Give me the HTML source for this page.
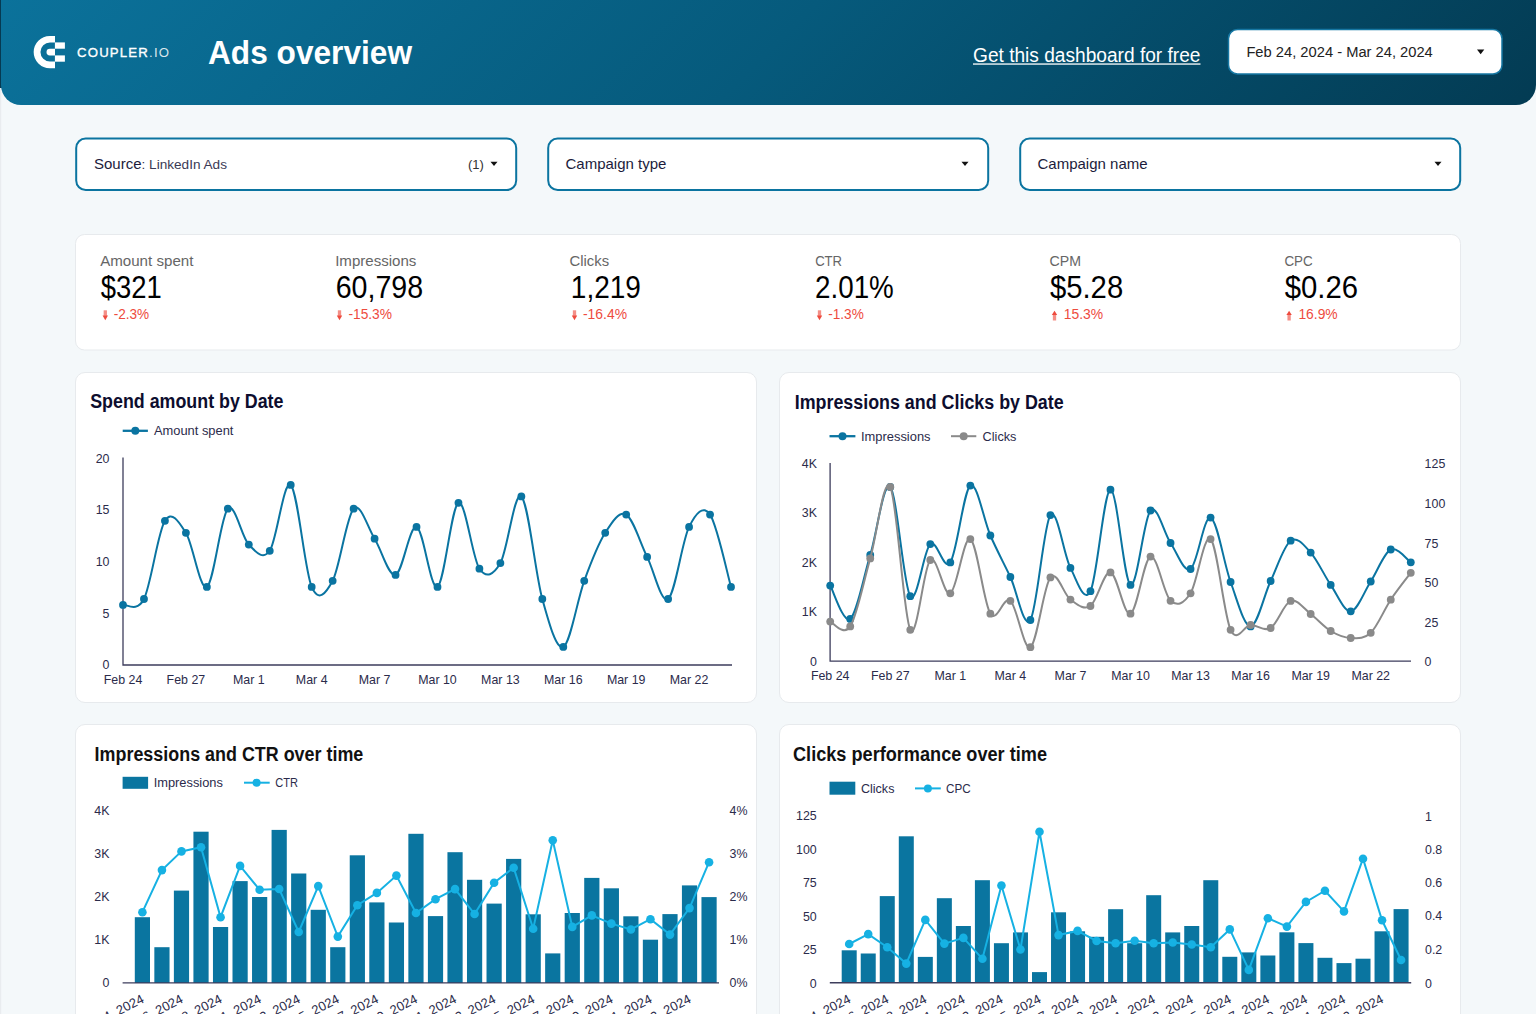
<!DOCTYPE html>
<html><head><meta charset="utf-8">
<style>
html,body{margin:0;padding:0;background:#f4f8fa;width:1536px;height:1014px;overflow:hidden}
svg{display:block;font-family:"Liberation Sans",sans-serif}
</style></head>
<body>
<svg width="1536" height="1014" viewBox="0 0 1536 1014">
<defs>
<linearGradient id="hg" x1="0" y1="0" x2="820" y2="820" gradientUnits="userSpaceOnUse">
<stop offset="0" stop-color="#0b729b"/>
<stop offset="0.5" stop-color="#065a7c"/>
<stop offset="1" stop-color="#033b53"/>
</linearGradient>
</defs>
<rect x="0" y="0" width="1536" height="1014" fill="#f4f8fa"/>
<rect x="0" y="0" width="2" height="88" fill="#063a52"/>
<rect x="0" y="88" width="1.2" height="926" fill="#e9ecef"/>
<path d="M1 0H1536V85A20 20 0 0 1 1516 105H21A20 20 0 0 1 1 85Z" fill="url(#hg)"/>
<g fill="#fff">
<path d="M55 35.9H49.8A16.15 16.15 0 0 0 49.8 68.2H55V61.5H50A9.55 9.55 0 0 1 50 42.4H55Z"/>
<rect x="54.9" y="42.4" width="10" height="6.3"/>
<rect x="54.9" y="55.4" width="10" height="6.3"/>
<path d="M55 48.7V55.5H49.9A3.4 3.4 0 0 1 49.9 48.7Z"/>
</g>
<text x="77" y="56.8" fill="#fff" font-size="13.2" textLength="92" lengthAdjust="spacing"><tspan stroke="#fff" stroke-width="0.35">COUPLER</tspan><tspan fill-opacity="0.85">.IO</tspan></text>
<text x="208" y="63.6" font-size="34" fill="#fff" font-weight="bold" textLength="204" lengthAdjust="spacingAndGlyphs">Ads overview</text>
<text x="973" y="62.4" font-size="19.4" fill="#fff" textLength="227.5" lengthAdjust="spacingAndGlyphs">Get this dashboard for free</text>
<rect x="973" y="63.4" width="227.5" height="1.3" fill="#fff"/>
<rect x="1228.5" y="29.5" width="273.5" height="44.5" rx="9" fill="#fff" stroke="#1677a3" stroke-width="1.5"/>
<text x="1246.4" y="57.2" font-size="15.1" fill="#222" textLength="186.4" lengthAdjust="spacingAndGlyphs">Feb 24, 2024 - Mar 24, 2024</text>
<path d="M1477 49.4H1484.3L1480.65 54.3Z" fill="#111"/>
<g fill="#fff" stroke="#0b74a0" stroke-width="2">
<rect x="76.2" y="138.4" width="440" height="51.6" rx="9.5"/>
<rect x="548.2" y="138.4" width="440" height="51.6" rx="9.5"/>
<rect x="1020.2" y="138.4" width="440" height="51.6" rx="9.5"/>
</g>
<text x="94" y="169.2" font-size="15" fill="#1c1c3c">Source<tspan fill="#3a3a55" font-size="13.6">: LinkedIn Ads</tspan></text>
<text x="468" y="169.2" font-size="13" fill="#333">(1)</text>
<text x="565.5" y="169.2" font-size="15" fill="#1c1c3c">Campaign type</text>
<text x="1037.5" y="169.2" font-size="15" fill="#1c1c3c">Campaign name</text>
<path d="M490.5 161.8H497.5 L494 166Z" fill="#111"/>
<path d="M961.5 161.8H968.5 L965 166Z" fill="#111"/>
<path d="M1434.5 161.8H1441.5 L1438 166Z" fill="#111"/>
<rect x="75.5" y="234.5" width="1385" height="115.5" rx="9" fill="#fff" stroke="#e7eaed" stroke-width="1"/>
<text x="100.15" y="266.1" font-size="15.2" fill="#666" textLength="93.25" lengthAdjust="spacingAndGlyphs">Amount spent</text>
<text x="100.8" y="298.2" font-size="30.6" fill="#000" textLength="61" lengthAdjust="spacingAndGlyphs">$321</text>
<text x="113.7" y="319.2" font-size="15.4" fill="#ee4b3e" textLength="35.5" lengthAdjust="spacingAndGlyphs">-2.3%</text>
<g fill="#ee4b3e"><rect x="103.65" y="310.3" width="3.3" height="5.6" fill-opacity="0.62"/><path d="M102.6 315.5H108 L105.3 320.3Z"/></g>
<text x="335.15" y="266.1" font-size="15.2" fill="#666" textLength="81.25" lengthAdjust="spacingAndGlyphs">Impressions</text>
<text x="335.7" y="298.2" font-size="30.6" fill="#000" textLength="87.5" lengthAdjust="spacingAndGlyphs">60,798</text>
<text x="348.4" y="319.2" font-size="15.4" fill="#ee4b3e" textLength="43.6" lengthAdjust="spacingAndGlyphs">-15.3%</text>
<g fill="#ee4b3e"><rect x="337.85" y="310.3" width="3.3" height="5.6" fill-opacity="0.62"/><path d="M336.8 315.5H342.2 L339.5 320.3Z"/></g>
<text x="569.6" y="266.1" font-size="15.2" fill="#666" textLength="39.5" lengthAdjust="spacingAndGlyphs">Clicks</text>
<text x="570.8" y="298.2" font-size="30.6" fill="#000" textLength="70.1" lengthAdjust="spacingAndGlyphs">1,219</text>
<text x="583" y="319.2" font-size="15.4" fill="#ee4b3e" textLength="44" lengthAdjust="spacingAndGlyphs">-16.4%</text>
<g fill="#ee4b3e"><rect x="572.85" y="310.3" width="3.3" height="5.6" fill-opacity="0.62"/><path d="M571.8 315.5H577.2 L574.5 320.3Z"/></g>
<text x="815.15" y="266.1" font-size="15.2" fill="#666" textLength="26.95" lengthAdjust="spacingAndGlyphs">CTR</text>
<text x="815" y="298.2" font-size="30.6" fill="#000" textLength="78.8" lengthAdjust="spacingAndGlyphs">2.01%</text>
<text x="828.2" y="319.2" font-size="15.4" fill="#ee4b3e" textLength="35.6" lengthAdjust="spacingAndGlyphs">-1.3%</text>
<g fill="#ee4b3e"><rect x="817.85" y="310.3" width="3.3" height="5.6" fill-opacity="0.62"/><path d="M816.8 315.5H822.2 L819.5 320.3Z"/></g>
<text x="1049.6" y="266.1" font-size="15.2" fill="#666" textLength="31.4" lengthAdjust="spacingAndGlyphs">CPM</text>
<text x="1049.9" y="298.2" font-size="30.6" fill="#000" textLength="73.3" lengthAdjust="spacingAndGlyphs">$5.28</text>
<text x="1063.7" y="319.2" font-size="15.4" fill="#ee4b3e" textLength="39.4" lengthAdjust="spacingAndGlyphs">15.3%</text>
<g fill="#ee4b3e"><path d="M1051.8 315H1057.2 L1054.5 310.8Z"/><rect x="1052.85" y="314.9" width="3.3" height="5.6" fill-opacity="0.62"/></g>
<text x="1284.4" y="266.1" font-size="15.2" fill="#666" textLength="28.3" lengthAdjust="spacingAndGlyphs">CPC</text>
<text x="1284.65" y="298.2" font-size="30.6" fill="#000" textLength="73.35" lengthAdjust="spacingAndGlyphs">$0.26</text>
<text x="1298.4" y="319.2" font-size="15.4" fill="#ee4b3e" textLength="39.3" lengthAdjust="spacingAndGlyphs">16.9%</text>
<g fill="#ee4b3e"><path d="M1286.4 315H1291.8 L1289.1 310.8Z"/><rect x="1287.45" y="314.9" width="3.3" height="5.6" fill-opacity="0.62"/></g>
<g fill="#fff" stroke="#e7eaed" stroke-width="1">
<rect x="75.5" y="372.5" width="681" height="330" rx="9.5"/>
<rect x="779.5" y="372.5" width="681" height="330" rx="9.5"/>
<rect x="75.5" y="724.5" width="681" height="340" rx="9.5"/>
<rect x="779.5" y="724.5" width="681" height="340" rx="9.5"/>
</g>
<text x="90.2" y="408" font-size="19.5" fill="#0d0d2e" font-weight="bold" textLength="193.3" lengthAdjust="spacingAndGlyphs">Spend amount by Date</text>
<line x1="122.7" y1="430.8" x2="147.9" y2="430.8" stroke="#0a74a1" stroke-width="2.3"/>
<circle cx="135.3" cy="430.8" r="4" fill="#0a74a1"/>
<text x="154" y="435.3" font-size="13" fill="#2b2b4b" textLength="79.4" lengthAdjust="spacingAndGlyphs">Amount spent</text>
<text x="109.5" y="462.9" font-size="12.4" fill="#2b2b4b" text-anchor="end">20</text>
<text x="109.5" y="514.4" font-size="12.4" fill="#2b2b4b" text-anchor="end">15</text>
<text x="109.5" y="566.2" font-size="12.4" fill="#2b2b4b" text-anchor="end">10</text>
<text x="109.5" y="617.8" font-size="12.4" fill="#2b2b4b" text-anchor="end">5</text>
<text x="109.5" y="669.4" font-size="12.4" fill="#2b2b4b" text-anchor="end">0</text>
<text x="123" y="683.6" font-size="12.4" fill="#2b2b4b" text-anchor="middle">Feb 24</text>
<text x="185.9" y="683.6" font-size="12.4" fill="#2b2b4b" text-anchor="middle">Feb 27</text>
<text x="248.8" y="683.6" font-size="12.4" fill="#2b2b4b" text-anchor="middle">Mar 1</text>
<text x="311.69" y="683.6" font-size="12.4" fill="#2b2b4b" text-anchor="middle">Mar 4</text>
<text x="374.59" y="683.6" font-size="12.4" fill="#2b2b4b" text-anchor="middle">Mar 7</text>
<text x="437.49" y="683.6" font-size="12.4" fill="#2b2b4b" text-anchor="middle">Mar 10</text>
<text x="500.39" y="683.6" font-size="12.4" fill="#2b2b4b" text-anchor="middle">Mar 13</text>
<text x="563.29" y="683.6" font-size="12.4" fill="#2b2b4b" text-anchor="middle">Mar 16</text>
<text x="626.18" y="683.6" font-size="12.4" fill="#2b2b4b" text-anchor="middle">Mar 19</text>
<text x="689.08" y="683.6" font-size="12.4" fill="#2b2b4b" text-anchor="middle">Mar 22</text>
<path d="M123 457.4V665H732" fill="none" stroke="#3d3d5c" stroke-width="1.3"/>
<path d="M123 604.9C126.49 603.92 136.98 613.02 143.97 599C150.95 584.98 157.94 531.83 164.93 520.8C171.92 509.77 178.91 521.78 185.9 532.8C192.89 543.82 199.88 590.92 206.86 586.9C213.85 582.88 220.84 515.75 227.83 508.7C234.82 501.65 241.81 537.58 248.8 544.6C255.78 551.62 262.77 560.75 269.76 550.8C276.75 540.85 283.74 478.88 290.73 484.9C297.72 490.92 304.71 570.92 311.69 586.9C318.68 602.88 325.67 593.83 332.66 580.8C339.65 567.77 346.64 515.72 353.63 508.7C360.61 501.68 367.6 527.67 374.59 538.7C381.58 549.73 388.57 576.87 395.56 574.9C402.55 572.93 409.54 524.9 416.52 526.9C423.51 528.9 430.5 590.92 437.49 586.9C444.48 582.88 451.47 505.83 458.46 502.8C465.44 499.77 472.43 558.65 479.42 568.7C486.41 578.75 493.4 575.15 500.39 563.1C507.38 551.05 514.37 490.42 521.35 496.4C528.34 502.38 535.33 573.92 542.32 599C549.31 624.08 556.3 649.93 563.29 646.9C570.27 643.87 577.26 599.82 584.25 580.8C591.24 561.78 598.23 543.83 605.22 532.8C612.21 521.77 619.2 510.58 626.18 514.6C633.17 518.62 640.16 542.83 647.15 556.9C654.14 570.97 661.13 604 668.12 599C675.1 594 682.09 540.97 689.08 526.9C696.07 512.83 703.06 504.6 710.05 514.6C717.04 524.6 727.52 574.85 731.01 586.9" fill="none" stroke="#0a74a1" stroke-width="2"/>
<g fill="#0a74a1"><circle cx="123" cy="604.9" r="3.9"/><circle cx="143.97" cy="599" r="3.9"/><circle cx="164.93" cy="520.8" r="3.9"/><circle cx="185.9" cy="532.8" r="3.9"/><circle cx="206.86" cy="586.9" r="3.9"/><circle cx="227.83" cy="508.7" r="3.9"/><circle cx="248.8" cy="544.6" r="3.9"/><circle cx="269.76" cy="550.8" r="3.9"/><circle cx="290.73" cy="484.9" r="3.9"/><circle cx="311.69" cy="586.9" r="3.9"/><circle cx="332.66" cy="580.8" r="3.9"/><circle cx="353.63" cy="508.7" r="3.9"/><circle cx="374.59" cy="538.7" r="3.9"/><circle cx="395.56" cy="574.9" r="3.9"/><circle cx="416.52" cy="526.9" r="3.9"/><circle cx="437.49" cy="586.9" r="3.9"/><circle cx="458.46" cy="502.8" r="3.9"/><circle cx="479.42" cy="568.7" r="3.9"/><circle cx="500.39" cy="563.1" r="3.9"/><circle cx="521.35" cy="496.4" r="3.9"/><circle cx="542.32" cy="599" r="3.9"/><circle cx="563.29" cy="646.9" r="3.9"/><circle cx="584.25" cy="580.8" r="3.9"/><circle cx="605.22" cy="532.8" r="3.9"/><circle cx="626.18" cy="514.6" r="3.9"/><circle cx="647.15" cy="556.9" r="3.9"/><circle cx="668.12" cy="599" r="3.9"/><circle cx="689.08" cy="526.9" r="3.9"/><circle cx="710.05" cy="514.6" r="3.9"/><circle cx="731.01" cy="586.9" r="3.9"/></g>
<text x="794.7" y="408.5" font-size="19.5" fill="#0d0d2e" font-weight="bold" textLength="269" lengthAdjust="spacingAndGlyphs">Impressions and Clicks by Date</text>
<line x1="829.5" y1="436.2" x2="855.4" y2="436.2" stroke="#0a74a1" stroke-width="2.3"/>
<circle cx="842.5" cy="436.2" r="4" fill="#0a74a1"/>
<text x="861" y="440.7" font-size="13" fill="#2b2b4b" textLength="69.5" lengthAdjust="spacingAndGlyphs">Impressions</text>
<line x1="951" y1="436.2" x2="976.3" y2="436.2" stroke="#8a8a8a" stroke-width="2"/>
<circle cx="963.7" cy="436.2" r="4" fill="#8a8a8a"/>
<text x="982.6" y="440.7" font-size="13" fill="#2b2b4b" textLength="33.8" lengthAdjust="spacingAndGlyphs">Clicks</text>
<text x="817" y="467.9" font-size="12.4" fill="#2b2b4b" text-anchor="end">4K</text>
<text x="817" y="517.3" font-size="12.4" fill="#2b2b4b" text-anchor="end">3K</text>
<text x="817" y="566.7" font-size="12.4" fill="#2b2b4b" text-anchor="end">2K</text>
<text x="817" y="616.1" font-size="12.4" fill="#2b2b4b" text-anchor="end">1K</text>
<text x="817" y="665.5" font-size="12.4" fill="#2b2b4b" text-anchor="end">0</text>
<text x="1424.6" y="468.2" font-size="12.4" fill="#2b2b4b">125</text>
<text x="1424.6" y="508" font-size="12.4" fill="#2b2b4b">100</text>
<text x="1424.6" y="547.7" font-size="12.4" fill="#2b2b4b">75</text>
<text x="1424.6" y="587.2" font-size="12.4" fill="#2b2b4b">50</text>
<text x="1424.6" y="627" font-size="12.4" fill="#2b2b4b">25</text>
<text x="1424.6" y="666.2" font-size="12.4" fill="#2b2b4b">0</text>
<text x="830.2" y="680.4" font-size="12.4" fill="#2b2b4b" text-anchor="middle">Feb 24</text>
<text x="890.26" y="680.4" font-size="12.4" fill="#2b2b4b" text-anchor="middle">Feb 27</text>
<text x="950.32" y="680.4" font-size="12.4" fill="#2b2b4b" text-anchor="middle">Mar 1</text>
<text x="1010.38" y="680.4" font-size="12.4" fill="#2b2b4b" text-anchor="middle">Mar 4</text>
<text x="1070.44" y="680.4" font-size="12.4" fill="#2b2b4b" text-anchor="middle">Mar 7</text>
<text x="1130.5" y="680.4" font-size="12.4" fill="#2b2b4b" text-anchor="middle">Mar 10</text>
<text x="1190.56" y="680.4" font-size="12.4" fill="#2b2b4b" text-anchor="middle">Mar 13</text>
<text x="1250.62" y="680.4" font-size="12.4" fill="#2b2b4b" text-anchor="middle">Mar 16</text>
<text x="1310.68" y="680.4" font-size="12.4" fill="#2b2b4b" text-anchor="middle">Mar 19</text>
<text x="1370.74" y="680.4" font-size="12.4" fill="#2b2b4b" text-anchor="middle">Mar 22</text>
<path d="M830.1 462.9V661.2H1411" fill="none" stroke="#3d3d5c" stroke-width="1.3"/>
<path d="M830.2 585.6C833.54 591.15 843.55 624 850.22 618.9C856.89 613.8 863.57 576.98 870.24 555C876.91 533.02 883.59 480.13 890.26 487C896.93 493.87 903.61 586.68 910.28 596.2C916.95 605.72 923.63 549.73 930.3 544.1C936.97 538.47 943.65 572.15 950.32 562.4C956.99 552.65 963.67 490.08 970.34 485.6C977.01 481.12 983.69 520.27 990.36 535.5C997.03 550.73 1003.71 562.92 1010.38 577C1017.05 591.08 1023.73 630.32 1030.4 620C1037.07 609.68 1043.75 523.78 1050.42 515.1C1057.09 506.42 1063.77 555.22 1070.44 567.9C1077.11 580.58 1083.79 604.23 1090.46 591.2C1097.13 578.17 1103.81 490.75 1110.48 489.7C1117.15 488.65 1123.83 581.43 1130.5 584.9C1137.17 588.37 1143.85 517.48 1150.52 510.5C1157.19 503.52 1163.87 533.25 1170.54 543C1177.21 552.75 1183.89 573.23 1190.56 569C1197.23 564.77 1203.91 515.43 1210.58 517.6C1217.25 519.77 1223.93 563.87 1230.6 582C1237.27 600.13 1243.95 626.57 1250.62 626.4C1257.29 626.23 1263.97 595.28 1270.64 581C1277.31 566.72 1283.99 545.43 1290.66 540.7C1297.33 535.97 1304.01 545.23 1310.68 552.6C1317.35 559.97 1324.03 575.12 1330.7 584.9C1337.37 594.68 1344.05 611.87 1350.72 611.3C1357.39 610.73 1364.07 591.8 1370.74 581.5C1377.41 571.2 1384.09 552.7 1390.76 549.5C1397.43 546.3 1407.44 560.17 1410.78 562.3" fill="none" stroke="#0a74a1" stroke-width="2"/>
<g fill="#0a74a1"><circle cx="830.2" cy="585.6" r="3.9"/><circle cx="850.22" cy="618.9" r="3.9"/><circle cx="870.24" cy="555" r="3.9"/><circle cx="890.26" cy="487" r="3.9"/><circle cx="910.28" cy="596.2" r="3.9"/><circle cx="930.3" cy="544.1" r="3.9"/><circle cx="950.32" cy="562.4" r="3.9"/><circle cx="970.34" cy="485.6" r="3.9"/><circle cx="990.36" cy="535.5" r="3.9"/><circle cx="1010.38" cy="577" r="3.9"/><circle cx="1030.4" cy="620" r="3.9"/><circle cx="1050.42" cy="515.1" r="3.9"/><circle cx="1070.44" cy="567.9" r="3.9"/><circle cx="1090.46" cy="591.2" r="3.9"/><circle cx="1110.48" cy="489.7" r="3.9"/><circle cx="1130.5" cy="584.9" r="3.9"/><circle cx="1150.52" cy="510.5" r="3.9"/><circle cx="1170.54" cy="543" r="3.9"/><circle cx="1190.56" cy="569" r="3.9"/><circle cx="1210.58" cy="517.6" r="3.9"/><circle cx="1230.6" cy="582" r="3.9"/><circle cx="1250.62" cy="626.4" r="3.9"/><circle cx="1270.64" cy="581" r="3.9"/><circle cx="1290.66" cy="540.7" r="3.9"/><circle cx="1310.68" cy="552.6" r="3.9"/><circle cx="1330.7" cy="584.9" r="3.9"/><circle cx="1350.72" cy="611.3" r="3.9"/><circle cx="1370.74" cy="581.5" r="3.9"/><circle cx="1390.76" cy="549.5" r="3.9"/><circle cx="1410.78" cy="562.3" r="3.9"/></g>
<path d="M830.2 621.6C833.54 622.4 843.55 636.93 850.22 626.4C856.89 615.87 863.57 581.63 870.24 558.4C876.91 535.17 883.59 475.1 890.26 487C896.93 498.9 903.61 617.63 910.28 629.8C916.95 641.97 923.63 566.08 930.3 560C936.97 553.92 943.65 596.78 950.32 593.3C956.99 589.82 963.67 535.7 970.34 539.1C977.01 542.5 983.69 603.42 990.36 613.7C997.03 623.98 1003.71 595.22 1010.38 600.8C1017.05 606.38 1023.73 651.1 1030.4 647.2C1037.07 643.3 1043.75 585.33 1050.42 577.4C1057.09 569.47 1063.77 594.83 1070.44 599.6C1077.11 604.37 1083.79 610.53 1090.46 606C1097.13 601.47 1103.81 571.12 1110.48 572.4C1117.15 573.68 1123.83 616.33 1130.5 613.7C1137.17 611.07 1143.85 558.75 1150.52 556.6C1157.19 554.45 1163.87 594.68 1170.54 600.8C1177.21 606.92 1183.89 603.58 1190.56 593.3C1197.23 583.02 1203.91 533.02 1210.58 539.1C1217.25 545.18 1223.93 615.48 1230.6 629.8C1237.27 644.12 1243.95 625.3 1250.62 625C1257.29 624.7 1263.97 632.02 1270.64 628C1277.31 623.98 1283.99 603.23 1290.66 600.9C1297.33 598.57 1304.01 608.98 1310.68 614C1317.35 619.02 1324.03 627 1330.7 631C1337.37 635 1344.05 637.7 1350.72 638C1357.39 638.3 1364.07 639.18 1370.74 632.8C1377.41 626.42 1384.09 609.7 1390.76 599.7C1397.43 589.7 1407.44 577.28 1410.78 572.8" fill="none" stroke="#8a8a8a" stroke-width="2"/>
<g fill="#8a8a8a"><circle cx="830.2" cy="621.6" r="3.9"/><circle cx="850.22" cy="626.4" r="3.9"/><circle cx="870.24" cy="558.4" r="3.9"/><circle cx="890.26" cy="487" r="3.9"/><circle cx="910.28" cy="629.8" r="3.9"/><circle cx="930.3" cy="560" r="3.9"/><circle cx="950.32" cy="593.3" r="3.9"/><circle cx="970.34" cy="539.1" r="3.9"/><circle cx="990.36" cy="613.7" r="3.9"/><circle cx="1010.38" cy="600.8" r="3.9"/><circle cx="1030.4" cy="647.2" r="3.9"/><circle cx="1050.42" cy="577.4" r="3.9"/><circle cx="1070.44" cy="599.6" r="3.9"/><circle cx="1090.46" cy="606" r="3.9"/><circle cx="1110.48" cy="572.4" r="3.9"/><circle cx="1130.5" cy="613.7" r="3.9"/><circle cx="1150.52" cy="556.6" r="3.9"/><circle cx="1170.54" cy="600.8" r="3.9"/><circle cx="1190.56" cy="593.3" r="3.9"/><circle cx="1210.58" cy="539.1" r="3.9"/><circle cx="1230.6" cy="629.8" r="3.9"/><circle cx="1250.62" cy="625" r="3.9"/><circle cx="1270.64" cy="628" r="3.9"/><circle cx="1290.66" cy="600.9" r="3.9"/><circle cx="1310.68" cy="614" r="3.9"/><circle cx="1330.7" cy="631" r="3.9"/><circle cx="1350.72" cy="638" r="3.9"/><circle cx="1370.74" cy="632.8" r="3.9"/><circle cx="1390.76" cy="599.7" r="3.9"/><circle cx="1410.78" cy="572.8" r="3.9"/></g>
<text x="94.6" y="761.2" font-size="19.5" fill="#111" font-weight="bold" textLength="268.7" lengthAdjust="spacingAndGlyphs">Impressions and CTR over time</text>
<rect x="122.6" y="776.8" width="25.5" height="12" fill="#0a75a0"/>
<text x="153.7" y="787.2" font-size="13" fill="#2b2b4b" textLength="69.2" lengthAdjust="spacingAndGlyphs">Impressions</text>
<line x1="244" y1="782.7" x2="269.7" y2="782.7" stroke="#16b1e3" stroke-width="2"/>
<circle cx="256.6" cy="782.7" r="4" fill="#16b1e3"/>
<text x="275.3" y="787.2" font-size="13" fill="#2b2b4b" textLength="22.7" lengthAdjust="spacingAndGlyphs">CTR</text>
<text x="109.5" y="815.1" font-size="12.4" fill="#2b2b4b" text-anchor="end">4K</text>
<text x="109.5" y="858.2" font-size="12.4" fill="#2b2b4b" text-anchor="end">3K</text>
<text x="109.5" y="901.3" font-size="12.4" fill="#2b2b4b" text-anchor="end">2K</text>
<text x="109.5" y="944.4" font-size="12.4" fill="#2b2b4b" text-anchor="end">1K</text>
<text x="109.5" y="987.4" font-size="12.4" fill="#2b2b4b" text-anchor="end">0</text>
<text x="729.5" y="815.4" font-size="12.4" fill="#2b2b4b">4%</text>
<text x="729.5" y="858.3" font-size="12.4" fill="#2b2b4b">3%</text>
<text x="729.5" y="901.3" font-size="12.4" fill="#2b2b4b">2%</text>
<text x="729.5" y="944.4" font-size="12.4" fill="#2b2b4b">1%</text>
<text x="729.5" y="987.4" font-size="12.4" fill="#2b2b4b">0%</text>
<g fill="#0a75a0"><rect x="134.8" y="917.2" width="15.2" height="65.8"/><rect x="154.34" y="947.2" width="15.2" height="35.8"/><rect x="173.88" y="890.6" width="15.2" height="92.4"/><rect x="193.42" y="831.7" width="15.2" height="151.3"/><rect x="212.96" y="927" width="15.2" height="56"/><rect x="232.5" y="881.1" width="15.2" height="101.9"/><rect x="252.04" y="897" width="15.2" height="86"/><rect x="271.58" y="829.9" width="15.2" height="153.1"/><rect x="291.12" y="873.5" width="15.2" height="109.5"/><rect x="310.66" y="909.8" width="15.2" height="73.2"/><rect x="330.2" y="947.2" width="15.2" height="35.8"/><rect x="349.74" y="855.3" width="15.2" height="127.7"/><rect x="369.28" y="902.4" width="15.2" height="80.6"/><rect x="388.82" y="922.5" width="15.2" height="60.5"/><rect x="408.36" y="833.8" width="15.2" height="149.2"/><rect x="427.9" y="916.1" width="15.2" height="66.9"/><rect x="447.44" y="852.2" width="15.2" height="130.8"/><rect x="466.98" y="879.8" width="15.2" height="103.2"/><rect x="486.52" y="903.6" width="15.2" height="79.4"/><rect x="506.06" y="858.9" width="15.2" height="124.1"/><rect x="525.6" y="914.3" width="15.2" height="68.7"/><rect x="545.14" y="953.4" width="15.2" height="29.6"/><rect x="564.68" y="913" width="15.2" height="70"/><rect x="584.22" y="877.9" width="15.2" height="105.1"/><rect x="603.76" y="888.3" width="15.2" height="94.7"/><rect x="623.3" y="916.3" width="15.2" height="66.7"/><rect x="642.84" y="939.7" width="15.2" height="43.3"/><rect x="662.38" y="914.1" width="15.2" height="68.9"/><rect x="681.92" y="885.4" width="15.2" height="97.6"/><rect x="701.46" y="897.1" width="15.2" height="85.9"/></g>
<line x1="122.6" y1="982.9" x2="719" y2="982.9" stroke="#3d3d5c" stroke-width="1.4"/>
<path d="M142.4 912.2 L161.94 870.1 L181.48 851.4 L201.02 847.2 L220.56 917.2 L240.1 865.9 L259.64 889.8 L279.18 889 L298.72 932 L318.26 886.1 L337.8 936.6 L357.34 905.2 L376.88 892.9 L396.42 875.6 L415.96 913 L435.5 899.2 L455.04 889.1 L474.58 914 L494.12 882.8 L513.66 867.7 L533.2 928.7 L552.74 840.3 L572.28 926.9 L591.82 915.4 L611.36 923.6 L630.9 929.5 L650.44 919.2 L669.98 934.6 L689.52 908.1 L709.06 862.2" fill="none" stroke="#16b1e3" stroke-width="2"/>
<g fill="#16b1e3"><circle cx="142.4" cy="912.2" r="4.3"/><circle cx="161.94" cy="870.1" r="4.3"/><circle cx="181.48" cy="851.4" r="4.3"/><circle cx="201.02" cy="847.2" r="4.3"/><circle cx="220.56" cy="917.2" r="4.3"/><circle cx="240.1" cy="865.9" r="4.3"/><circle cx="259.64" cy="889.8" r="4.3"/><circle cx="279.18" cy="889" r="4.3"/><circle cx="298.72" cy="932" r="4.3"/><circle cx="318.26" cy="886.1" r="4.3"/><circle cx="337.8" cy="936.6" r="4.3"/><circle cx="357.34" cy="905.2" r="4.3"/><circle cx="376.88" cy="892.9" r="4.3"/><circle cx="396.42" cy="875.6" r="4.3"/><circle cx="415.96" cy="913" r="4.3"/><circle cx="435.5" cy="899.2" r="4.3"/><circle cx="455.04" cy="889.1" r="4.3"/><circle cx="474.58" cy="914" r="4.3"/><circle cx="494.12" cy="882.8" r="4.3"/><circle cx="513.66" cy="867.7" r="4.3"/><circle cx="533.2" cy="928.7" r="4.3"/><circle cx="552.74" cy="840.3" r="4.3"/><circle cx="572.28" cy="926.9" r="4.3"/><circle cx="591.82" cy="915.4" r="4.3"/><circle cx="611.36" cy="923.6" r="4.3"/><circle cx="630.9" cy="929.5" r="4.3"/><circle cx="650.44" cy="919.2" r="4.3"/><circle cx="669.98" cy="934.6" r="4.3"/><circle cx="689.52" cy="908.1" r="4.3"/><circle cx="709.06" cy="862.2" r="4.3"/></g>
<text x="144.9" y="1002" font-size="13" fill="#2b2b4b" text-anchor="end" transform="rotate(-27 144.9 1002)">Feb 24, 2024</text>
<text x="183.98" y="1002" font-size="13" fill="#2b2b4b" text-anchor="end" transform="rotate(-27 183.98 1002)">Feb 26, 2024</text>
<text x="223.06" y="1002" font-size="13" fill="#2b2b4b" text-anchor="end" transform="rotate(-27 223.06 1002)">Feb 28, 2024</text>
<text x="262.14" y="1002" font-size="13" fill="#2b2b4b" text-anchor="end" transform="rotate(-27 262.14 1002)">Mar 1, 2024</text>
<text x="301.22" y="1002" font-size="13" fill="#2b2b4b" text-anchor="end" transform="rotate(-27 301.22 1002)">Mar 3, 2024</text>
<text x="340.3" y="1002" font-size="13" fill="#2b2b4b" text-anchor="end" transform="rotate(-27 340.3 1002)">Mar 5, 2024</text>
<text x="379.38" y="1002" font-size="13" fill="#2b2b4b" text-anchor="end" transform="rotate(-27 379.38 1002)">Mar 7, 2024</text>
<text x="418.46" y="1002" font-size="13" fill="#2b2b4b" text-anchor="end" transform="rotate(-27 418.46 1002)">Mar 9, 2024</text>
<text x="457.54" y="1002" font-size="13" fill="#2b2b4b" text-anchor="end" transform="rotate(-27 457.54 1002)">Mar 11, 2024</text>
<text x="496.62" y="1002" font-size="13" fill="#2b2b4b" text-anchor="end" transform="rotate(-27 496.62 1002)">Mar 13, 2024</text>
<text x="535.7" y="1002" font-size="13" fill="#2b2b4b" text-anchor="end" transform="rotate(-27 535.7 1002)">Mar 15, 2024</text>
<text x="574.78" y="1002" font-size="13" fill="#2b2b4b" text-anchor="end" transform="rotate(-27 574.78 1002)">Mar 17, 2024</text>
<text x="613.86" y="1002" font-size="13" fill="#2b2b4b" text-anchor="end" transform="rotate(-27 613.86 1002)">Mar 19, 2024</text>
<text x="652.94" y="1002" font-size="13" fill="#2b2b4b" text-anchor="end" transform="rotate(-27 652.94 1002)">Mar 21, 2024</text>
<text x="692.02" y="1002" font-size="13" fill="#2b2b4b" text-anchor="end" transform="rotate(-27 692.02 1002)">Mar 23, 2024</text>
<text x="793" y="760.8" font-size="19.5" fill="#111" font-weight="bold" textLength="254" lengthAdjust="spacingAndGlyphs">Clicks performance over time</text>
<rect x="829.5" y="781.7" width="25.8" height="13" fill="#0a75a0"/>
<text x="861" y="792.5" font-size="13" fill="#2b2b4b" textLength="33.4" lengthAdjust="spacingAndGlyphs">Clicks</text>
<line x1="915" y1="788.4" x2="940.8" y2="788.4" stroke="#16b1e3" stroke-width="2"/>
<circle cx="927.9" cy="788.4" r="4" fill="#16b1e3"/>
<text x="946" y="792.9" font-size="13" fill="#2b2b4b" textLength="24.7" lengthAdjust="spacingAndGlyphs">CPC</text>
<text x="816.7" y="820.2" font-size="12.4" fill="#2b2b4b" text-anchor="end">125</text>
<text x="816.7" y="853.6" font-size="12.4" fill="#2b2b4b" text-anchor="end">100</text>
<text x="816.7" y="887" font-size="12.4" fill="#2b2b4b" text-anchor="end">75</text>
<text x="816.7" y="920.5" font-size="12.4" fill="#2b2b4b" text-anchor="end">50</text>
<text x="816.7" y="954" font-size="12.4" fill="#2b2b4b" text-anchor="end">25</text>
<text x="816.7" y="987.6" font-size="12.4" fill="#2b2b4b" text-anchor="end">0</text>
<text x="1425" y="820.6" font-size="12.4" fill="#2b2b4b">1</text>
<text x="1425" y="853.8" font-size="12.4" fill="#2b2b4b">0.8</text>
<text x="1425" y="887.1" font-size="12.4" fill="#2b2b4b">0.6</text>
<text x="1425" y="920.4" font-size="12.4" fill="#2b2b4b">0.4</text>
<text x="1425" y="953.8" font-size="12.4" fill="#2b2b4b">0.2</text>
<text x="1425" y="987.6" font-size="12.4" fill="#2b2b4b">0</text>
<g fill="#0a75a0"><rect x="841.7" y="950.3" width="15" height="32.7"/><rect x="860.73" y="953.5" width="15" height="29.5"/><rect x="879.76" y="896.1" width="15" height="86.9"/><rect x="898.79" y="836.3" width="15" height="146.7"/><rect x="917.82" y="956.9" width="15" height="26.1"/><rect x="936.85" y="898.2" width="15" height="84.8"/><rect x="955.88" y="926" width="15" height="57"/><rect x="974.91" y="880.2" width="15" height="102.8"/><rect x="993.94" y="943.2" width="15" height="39.8"/><rect x="1012.97" y="932.4" width="15" height="50.6"/><rect x="1032" y="972.1" width="15" height="10.9"/><rect x="1051.03" y="912.3" width="15" height="70.7"/><rect x="1070.06" y="931.3" width="15" height="51.7"/><rect x="1089.09" y="936.8" width="15" height="46.2"/><rect x="1108.12" y="909.2" width="15" height="73.8"/><rect x="1127.15" y="943.2" width="15" height="39.8"/><rect x="1146.18" y="895.2" width="15" height="87.8"/><rect x="1165.21" y="932.4" width="15" height="50.6"/><rect x="1184.24" y="926" width="15" height="57"/><rect x="1203.27" y="880.2" width="15" height="102.8"/><rect x="1222.3" y="956.8" width="15" height="26.2"/><rect x="1241.33" y="952.4" width="15" height="30.6"/><rect x="1260.36" y="955.5" width="15" height="27.5"/><rect x="1279.39" y="932.3" width="15" height="50.7"/><rect x="1298.42" y="943.1" width="15" height="39.9"/><rect x="1317.45" y="957.8" width="15" height="25.2"/><rect x="1336.48" y="963.1" width="15" height="19.9"/><rect x="1355.51" y="958.7" width="15" height="24.3"/><rect x="1374.54" y="931.3" width="15" height="51.7"/><rect x="1393.57" y="909.1" width="15" height="73.9"/></g>
<line x1="829.8" y1="982.8" x2="1411.2" y2="982.8" stroke="#3d3d5c" stroke-width="1.4"/>
<path d="M849.2 944 L868.23 934.1 L887.26 947.2 L906.29 963.6 L925.32 919.9 L944.35 943.6 L963.38 937.9 L982.41 958.8 L1001.44 885.5 L1020.47 949.5 L1039.5 831.7 L1058.53 935.1 L1077.56 930.9 L1096.59 941 L1115.62 943.2 L1134.65 940.8 L1153.68 943.2 L1172.71 942.5 L1191.74 944.5 L1210.77 947.3 L1229.8 929.4 L1248.83 969.9 L1267.86 918.2 L1286.89 926.6 L1305.92 901.9 L1324.95 890.7 L1343.98 911.4 L1363.01 858.7 L1382.04 920.3 L1401.07 960" fill="none" stroke="#16b1e3" stroke-width="2"/>
<g fill="#16b1e3"><circle cx="849.2" cy="944" r="4.3"/><circle cx="868.23" cy="934.1" r="4.3"/><circle cx="887.26" cy="947.2" r="4.3"/><circle cx="906.29" cy="963.6" r="4.3"/><circle cx="925.32" cy="919.9" r="4.3"/><circle cx="944.35" cy="943.6" r="4.3"/><circle cx="963.38" cy="937.9" r="4.3"/><circle cx="982.41" cy="958.8" r="4.3"/><circle cx="1001.44" cy="885.5" r="4.3"/><circle cx="1020.47" cy="949.5" r="4.3"/><circle cx="1039.5" cy="831.7" r="4.3"/><circle cx="1058.53" cy="935.1" r="4.3"/><circle cx="1077.56" cy="930.9" r="4.3"/><circle cx="1096.59" cy="941" r="4.3"/><circle cx="1115.62" cy="943.2" r="4.3"/><circle cx="1134.65" cy="940.8" r="4.3"/><circle cx="1153.68" cy="943.2" r="4.3"/><circle cx="1172.71" cy="942.5" r="4.3"/><circle cx="1191.74" cy="944.5" r="4.3"/><circle cx="1210.77" cy="947.3" r="4.3"/><circle cx="1229.8" cy="929.4" r="4.3"/><circle cx="1248.83" cy="969.9" r="4.3"/><circle cx="1267.86" cy="918.2" r="4.3"/><circle cx="1286.89" cy="926.6" r="4.3"/><circle cx="1305.92" cy="901.9" r="4.3"/><circle cx="1324.95" cy="890.7" r="4.3"/><circle cx="1343.98" cy="911.4" r="4.3"/><circle cx="1363.01" cy="858.7" r="4.3"/><circle cx="1382.04" cy="920.3" r="4.3"/><circle cx="1401.07" cy="960" r="4.3"/></g>
<text x="851.7" y="1002" font-size="13" fill="#2b2b4b" text-anchor="end" transform="rotate(-27 851.7 1002)">Feb 24, 2024</text>
<text x="889.76" y="1002" font-size="13" fill="#2b2b4b" text-anchor="end" transform="rotate(-27 889.76 1002)">Feb 26, 2024</text>
<text x="927.82" y="1002" font-size="13" fill="#2b2b4b" text-anchor="end" transform="rotate(-27 927.82 1002)">Feb 28, 2024</text>
<text x="965.88" y="1002" font-size="13" fill="#2b2b4b" text-anchor="end" transform="rotate(-27 965.88 1002)">Mar 1, 2024</text>
<text x="1003.94" y="1002" font-size="13" fill="#2b2b4b" text-anchor="end" transform="rotate(-27 1003.94 1002)">Mar 3, 2024</text>
<text x="1042" y="1002" font-size="13" fill="#2b2b4b" text-anchor="end" transform="rotate(-27 1042 1002)">Mar 5, 2024</text>
<text x="1080.06" y="1002" font-size="13" fill="#2b2b4b" text-anchor="end" transform="rotate(-27 1080.06 1002)">Mar 7, 2024</text>
<text x="1118.12" y="1002" font-size="13" fill="#2b2b4b" text-anchor="end" transform="rotate(-27 1118.12 1002)">Mar 9, 2024</text>
<text x="1156.18" y="1002" font-size="13" fill="#2b2b4b" text-anchor="end" transform="rotate(-27 1156.18 1002)">Mar 11, 2024</text>
<text x="1194.24" y="1002" font-size="13" fill="#2b2b4b" text-anchor="end" transform="rotate(-27 1194.24 1002)">Mar 13, 2024</text>
<text x="1232.3" y="1002" font-size="13" fill="#2b2b4b" text-anchor="end" transform="rotate(-27 1232.3 1002)">Mar 15, 2024</text>
<text x="1270.36" y="1002" font-size="13" fill="#2b2b4b" text-anchor="end" transform="rotate(-27 1270.36 1002)">Mar 17, 2024</text>
<text x="1308.42" y="1002" font-size="13" fill="#2b2b4b" text-anchor="end" transform="rotate(-27 1308.42 1002)">Mar 19, 2024</text>
<text x="1346.48" y="1002" font-size="13" fill="#2b2b4b" text-anchor="end" transform="rotate(-27 1346.48 1002)">Mar 21, 2024</text>
<text x="1384.54" y="1002" font-size="13" fill="#2b2b4b" text-anchor="end" transform="rotate(-27 1384.54 1002)">Mar 23, 2024</text>
</svg>
</body></html>
